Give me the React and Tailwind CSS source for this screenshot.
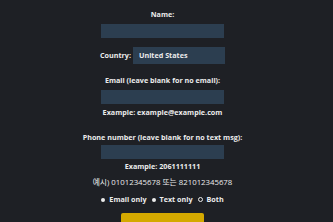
export default function App() {
  const font = { fontFamily: '"Open Sans", "Noto Sans CJK KR", sans-serif' };
  return (
    <div className="w-[333px] h-[222px] overflow-hidden bg-[#1e2025] text-[#ececec] font-bold text-[7.2px]" style={font}>
      <div className="w-[325px] flex flex-col items-center pt-[10px]">
        <div className="leading-[9px]">Name:</div>
        <div className="mt-[5px] w-[123px] h-[14px] bg-[#2c3e50]" />
        <div className="mt-[9px] flex items-center">
          <span className="mr-[2px]">Country:</span>
          <div className="w-[92px] h-[17px] bg-[#2c3e50] flex items-center pl-[6px]">United States</div>
        </div>
        <div className="mt-[12px] leading-[9px]">Email (leave blank for no email):</div>
        <div className="mt-[5px] w-[123px] h-[14px] bg-[#2c3e50]" />
        <div className="mt-[4px] leading-[9px]">Example: example@example.com</div>
        <div className="mt-[16px] leading-[9px]">Phone number (leave blank for no text msg):</div>
        <div className="mt-[3px] w-[123px] h-[14px] bg-[#2c3e50]" />
        <div className="mt-[3px] leading-[9px]">Example: 2061111111</div>
        <div className="mt-[7px] leading-[9px] font-normal text-[7.8px]">예시) 01012345678 또는 821012345678</div>
        <div className="mt-[8px] flex items-center gap-[4px] leading-[9px]">
          <span className="w-[4px] h-[4px] rounded-full bg-[#ececec]" />
          <span>Email only</span>
          <span className="ml-[1px] w-[4px] h-[4px] rounded-full bg-[#ececec]" />
          <span>Text only</span>
          <span className="ml-[1px] w-[5px] h-[5px] rounded-full border border-[#ececec]" />
          <span>Both</span>
        </div>
        <div className="mt-[9px] w-[83px] h-[16px] rounded-[2px] bg-[#d4a900]" />
      </div>
    </div>
  );
}
